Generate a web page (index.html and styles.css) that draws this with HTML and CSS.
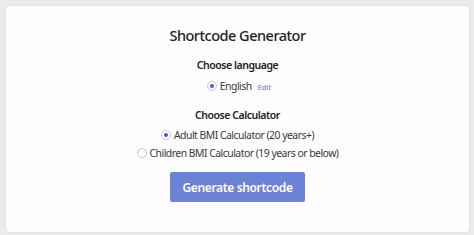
FILE: index.html
```html
<!DOCTYPE html>
<html lang="en">
<head>
    <meta charset="UTF-8">
    <title>Shortcode Generator</title>
    <link rel="stylesheet" href="styles.css">
</head>
<body>
    <div class="card">
        <h1>Shortcode Generator</h1>

        <h2>Choose language</h2>
        <div class="option-row">
            <label class="option">
                <input type="radio" name="lang" checked>
                <span>English</span>
            </label>
            <a href="#" class="edit-link">Edit</a>
        </div>

        <h2 class="calc-title">Choose Calculator</h2>
        <div class="option-list">
            <label class="option">
                <input type="radio" name="calc" checked>
                <span>Adult BMI Calculator (20 years+)</span>
            </label>
            <label class="option">
                <input type="radio" name="calc">
                <span>Children BMI Calculator (19 years or below)</span>
            </label>
        </div>

        <button type="button" class="generate-btn">Generate shortcode</button>
    </div>
</body>
</html>
```

FILE: styles.css
```css
* {
    margin: 0;
    padding: 0;
    box-sizing: border-box;
}

body {
    font-family: 'Noto Sans', 'Open Sans', sans-serif;
    background: #ebebed;
    padding: 6px 5px 3px 6px;
    color: #222;
}

.card {
    background: #fdfdfd;
    border-radius: 4px;
    box-shadow: 0 0 3px rgba(0, 0, 0, 0.08);
    height: 226px;
    display: flex;
    flex-direction: column;
    align-items: center;
    padding-top: 19px;
}

h1 {
    font-size: 14.5px;
    font-weight: 500;
    letter-spacing: -0.5px;
    color: #222;
    line-height: 20px;
}

h2 {
    font-size: 10.5px;
    font-weight: 600;
    letter-spacing: -0.45px;
    color: #222;
    margin-top: 12px;
    line-height: 16px;
}

.calc-title {
    margin-top: 12px;
}

.option-row {
    display: flex;
    align-items: center;
    gap: 6px;
    margin-top: 4px;
    padding-left: 3px;
}

.option {
    display: flex;
    align-items: center;
    gap: 2px;
    font-size: 10.4px;
    letter-spacing: -0.5px;
    color: #383838;
    line-height: 18px;
}

.option input {
    appearance: none;
    width: 10px;
    height: 10px;
    border: 1px solid #c4c4cc;
    border-radius: 50%;
    background: #fff;
    margin-right: 1px;
    display: grid;
    place-content: center;
}

.option input:checked {
    border-color: #c3c6e6;
}

.option input:checked::before {
    content: '';
    width: 4px;
    height: 4px;
    border-radius: 50%;
    background: #4f58c0;
}

.edit-link {
    font-size: 7.5px;
    color: #7565d6;
    text-decoration: none;
    margin-top: 2px;
}

.option-list {
    display: flex;
    flex-direction: column;
    align-items: center;
    margin-top: 3px;
}

.generate-btn {
    margin-top: 10px;
    width: 135px;
    height: 30px;
    border: none;
    border-radius: 2px;
    background: #6b82d7;
    color: #fff;
    font-family: inherit;
    font-size: 12px;
    font-weight: 600;
    letter-spacing: -0.35px;
}
```
